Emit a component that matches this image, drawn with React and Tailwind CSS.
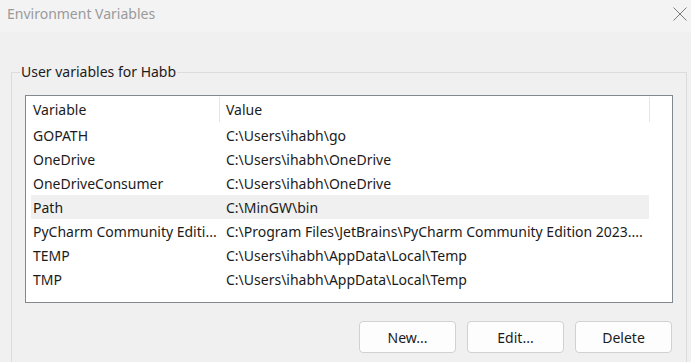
export default function App() {
  const rows = [
    ["GOPATH", "C:\\Users\\ihabh\\go"],
    ["OneDrive", "C:\\Users\\ihabh\\OneDrive"],
    ["OneDriveConsumer", "C:\\Users\\ihabh\\OneDrive"],
    ["Path", "C:\\MinGW\\bin"],
    ["PyCharm Community Editi...", "C:\\Program Files\\JetBrains\\PyCharm Community Edition 2023...."],
    ["TEMP", "C:\\Users\\ihabh\\AppData\\Local\\Temp"],
    ["TMP", "C:\\Users\\ihabh\\AppData\\Local\\Temp"],
  ];
  return (
    <div className="w-[691px] h-[362px] overflow-hidden bg-[#f0f0f0] text-[#1b1b1b] font-['Noto_Sans',sans-serif]">
      <div className="h-[32px] bg-[#f3f3f3] flex items-center justify-between pl-[7px] pr-[4px]">
        <span className="text-[14px] text-[#9a9a9a] leading-none -mt-[5px]">Environment Variables</span>
        <svg width="14" height="14" viewBox="0 0 14 14" className="-mt-[5px]">
          <path d="M0.5 0.5 L13.5 13.5 M13.5 0.5 L0.5 13.5" stroke="#7a7a7a" strokeWidth="1" fill="none" />
        </svg>
      </div>
      <div className="relative ml-[11px] mr-[4px] mt-[40px] h-[320px] border border-[#dcdcdc] pl-[13px] pr-[13px] pt-[22px]">
        <span className="absolute left-[8px] -top-[11px] bg-[#f0f0f0] px-[1px] text-[14px] leading-[20px]">
          User variables for Habb
        </span>
        <div className="h-[208px] border border-[#828790] bg-white text-[14px]">
          <div className="flex h-[27px] items-center">
            <div className="w-[193px] pl-[7px] leading-[20px]">Variable</div>
            <div className="w-px h-[25px] self-start mt-px bg-[#e5e5e5]"></div>
            <div className="w-[429px] pl-[6px] leading-[20px]">Value</div>
            <div className="w-px h-[25px] self-start mt-px bg-[#e5e5e5]"></div>
          </div>
          {rows.map(([k, v]) => (
            <div
              key={k}
              className={`ml-[5px] w-[618px] h-[24px] flex items-center whitespace-nowrap ${k === "Path" ? "bg-[#f0f0f0]" : ""}`}
            >
              <div className="w-[195px] pl-[2px] overflow-hidden">{k}</div>
              <div className="overflow-hidden">{v}</div>
            </div>
          ))}
        </div>
        <div className="flex justify-end gap-[11px] pr-[1px] mt-[18px]">
          {["New...", "Edit...", "Delete"].map((b) => (
            <button
              key={b}
              className="w-[97px] h-[32px] rounded-[4px] border border-[#d1d1d1] bg-[#fdfdfd] text-[14px] text-[#1b1b1b]"
            >
              {b}
            </button>
          ))}
        </div>
      </div>
    </div>
  );
}
